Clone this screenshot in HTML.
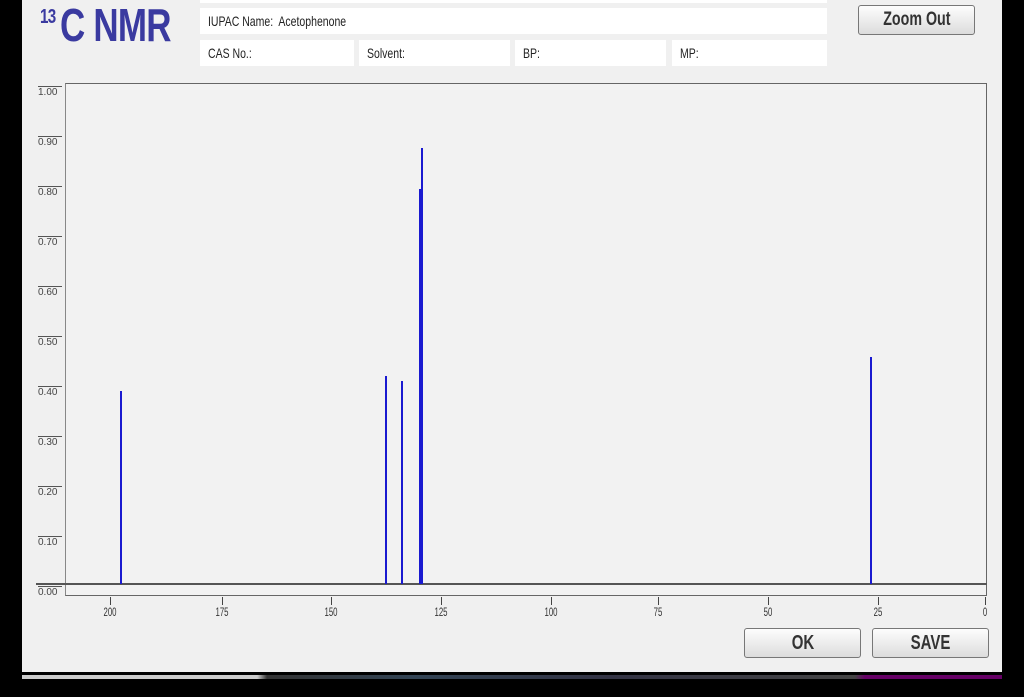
<!DOCTYPE html>
<html><head><style>
body{margin:0;width:1024px;height:697px;background:#000;position:relative;overflow:hidden;font-family:"Liberation Sans",sans-serif}
.panel{position:absolute;left:22px;top:0;width:980px;height:672px;background:#f0f0f0}
.f{position:absolute;background:#fff;font-size:14px;color:#222;line-height:26px;padding-left:8px;box-sizing:border-box}
.f span{display:inline-block;transform:scaleX(.75);transform-origin:left}
.btn{position:absolute;border:1px solid #777;border-radius:3px;background:linear-gradient(#fdfdfd,#dcdcdc);color:#333;font-weight:bold;text-align:center;box-sizing:border-box}
.btn span{display:inline-block;transform:scaleX(.75)}
.yl{position:absolute;left:38px;font-size:10px;color:#444;width:24px;border-top:1px solid #555;line-height:11px}
.xl{position:absolute;top:605px;font-size:12px;color:#333;transform:translateX(-50%) scaleX(.65)}
.tk{position:absolute;top:597px;width:1px;height:8px;background:#444}
.pk{position:absolute;width:2px;background:#1a1ad0}
</style></head><body>
<div class="panel"></div>
<div style="position:absolute;left:200px;top:0;width:627px;height:3px;background:#fff"></div>
<div style="position:absolute;left:40px;top:-2px;color:#3a3aa0;font-weight:bold;font-size:46px;transform:scaleX(.76);transform-origin:left;letter-spacing:-1px;white-space:nowrap"><sup style="font-size:20px;vertical-align:18px;margin-right:6px">13</sup>C NMR</div>
<div class="f" style="left:200px;top:8px;width:627px;height:26px"><span>IUPAC Name:&nbsp; Acetophenone</span></div>
<div class="f" style="left:200px;top:40px;width:154px;height:26px"><span>CAS No.:</span></div>
<div class="f" style="left:359px;top:40px;width:151px;height:26px"><span>Solvent:</span></div>
<div class="f" style="left:515px;top:40px;width:151px;height:26px"><span>BP:</span></div>
<div class="f" style="left:672px;top:40px;width:155px;height:26px"><span>MP:</span></div>
<div class="btn" style="left:858px;top:5px;width:117px;height:30px;font-size:19px;line-height:27px"><span>Zoom Out</span></div>
<div style="position:absolute;left:65px;top:83px;width:922px;height:513px;border:1px solid #666;border-left-color:#888;box-sizing:border-box;background:#f2f2f2"></div>
<div style="position:absolute;left:36px;top:583px;width:951px;height:2px;background:#555"></div>
<div class="yl" style="top:86px">1.00</div><div class="yl" style="top:136px">0.90</div><div class="yl" style="top:186px">0.80</div><div class="yl" style="top:236px">0.70</div><div class="yl" style="top:286px">0.60</div><div class="yl" style="top:336px">0.50</div><div class="yl" style="top:386px">0.40</div><div class="yl" style="top:436px">0.30</div><div class="yl" style="top:486px">0.20</div><div class="yl" style="top:536px">0.10</div><div class="yl" style="top:586px">0.00</div>
<div class="tk" style="left:110px"></div><div class="tk" style="left:222px"></div><div class="tk" style="left:331px"></div><div class="tk" style="left:441px"></div><div class="tk" style="left:551px"></div><div class="tk" style="left:658px"></div><div class="tk" style="left:768px"></div><div class="tk" style="left:878px"></div><div class="tk" style="left:985px"></div>
<div class="xl" style="left:110px">200</div><div class="xl" style="left:222px">175</div><div class="xl" style="left:331px">150</div><div class="xl" style="left:441px">125</div><div class="xl" style="left:551px">100</div><div class="xl" style="left:658px">75</div><div class="xl" style="left:768px">50</div><div class="xl" style="left:878px">25</div><div class="xl" style="left:985px">0</div>
<div class="pk" style="left:120px;top:391px;height:193px"></div>
<div class="pk" style="left:385px;top:376px;height:208px"></div>
<div class="pk" style="left:401px;top:381px;height:203px"></div>
<div class="pk" style="left:419px;top:189px;height:395px"></div>
<div class="pk" style="left:421px;top:148px;height:436px"></div>
<div class="pk" style="left:870px;top:357px;height:227px"></div>
<div class="btn" style="left:744px;top:628px;width:117px;height:30px;font-size:20px;line-height:28px"><span>OK</span></div>
<div class="btn" style="left:872px;top:628px;width:117px;height:30px;font-size:20px;line-height:28px"><span>SAVE</span></div>
<div style="position:absolute;left:22px;top:675px;width:980px;height:4px;background:linear-gradient(90deg,#ccc 0 24%,#333 25%,#345 40%,#334 60%,#444 85%,#606 86%)"></div>
</body></html>
